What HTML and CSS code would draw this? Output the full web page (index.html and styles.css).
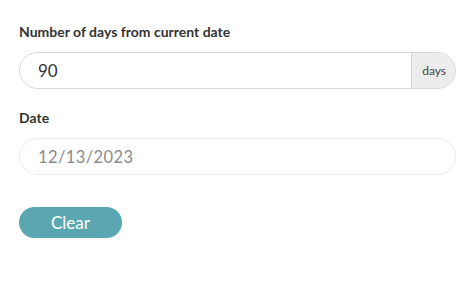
FILE: index.html
```html
<!DOCTYPE html>
<html>
<head>
	<meta charset="utf-8">
	<title>Days from date</title>
	<link rel="stylesheet" href="styles.css">
</head>
<body>
	<div class="form">
		<div class="field">
			<label class="label" for="days">Number of days from current date</label>
			<div class="group">
				<input class="input" id="days" type="text" value="90">
				<span class="addon">days</span>
			</div>
		</div>
		<div class="field">
			<label class="label" for="date">Date</label>
			<input class="input single" id="date" type="text" value="12/13/2023" disabled>
		</div>
		<button class="btn">Clear</button>
	</div>
</body>
</html>
```

FILE: styles.css
```css
body {
	margin: 0;
	background-color: #fff;
	font-family: Lato, "Open Sans", sans-serif;
}

.form {
	padding: 23px 18px 0 19px;
	display: flex;
	flex-direction: column;
	align-items: flex-start;
}

.field {
	width: 100%;
	margin-bottom: 20px;
}

.label {
	display: block;
	font-weight: bold;
	font-size: 14px;
	line-height: 17px;
	color: #333;
	margin-bottom: 12px;
}

.group {
	display: flex;
	height: 37px;
	border: 1px solid #d6d6d6;
	border-radius: 19px;
	overflow: hidden;
	box-sizing: border-box;
}

.input {
	flex: 1;
	min-width: 0;
	border: none;
	outline: none;
	padding: 0 18px;
	font-family: inherit;
	font-size: 17px;
	color: #333;
	background: transparent;
}

.input.single {
	display: block;
	width: 100%;
	height: 37px;
	box-sizing: border-box;
	border: 1px solid #ebebeb;
	border-radius: 19px;
	color: #8a8a8a;
	background: #fff;
	letter-spacing: 0.4px;
	font-size: 16.5px;
}

.addon {
	display: flex;
	align-items: center;
	padding: 0 9px 0 10px;
	background-color: #ececec;
	border-left: 1px solid #d6d6d6;
	font-size: 12px;
	color: #444;
}

.btn {
	margin-top: 12px;
	width: 103px;
	height: 31px;
	border: none;
	border-radius: 16px;
	background-color: #5aa7b1;
	color: #fff;
	font-family: inherit;
	font-size: 17px;
	cursor: pointer;
}
```
